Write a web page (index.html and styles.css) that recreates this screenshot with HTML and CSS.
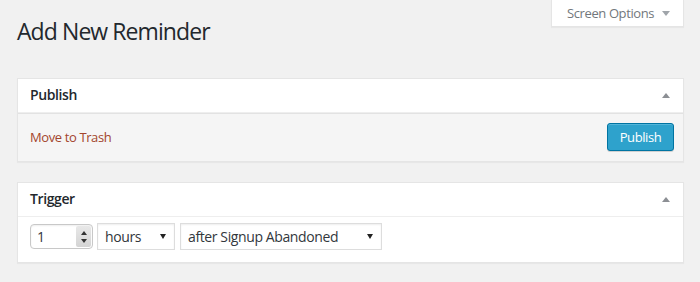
FILE: index.html
```html
<!DOCTYPE html>
<html>
<head>
<meta charset="utf-8">
<link rel="stylesheet" href="styles.css">
</head>
<body>
<div class="wrap">
  <div class="top">
    <h1 class="title">Add New Reminder</h1>
    <div class="screen-tab">Screen Options <span class="tab-caret"></span></div>
  </div>

  <div class="postbox">
    <div class="hndle"><span>Publish</span><span class="toggle"></span></div>
    <div class="actions">
      <a class="trash" href="#">Move to Trash</a>
      <button class="btn-primary">Publish</button>
    </div>
  </div>

  <div class="postbox">
    <div class="hndle"><span>Trigger</span><span class="toggle"></span></div>
    <div class="inside">
      <div class="number">
        <span class="num-val">1</span>
        <span class="spin"><span class="up"></span><span class="down"></span></span>
      </div>
      <div class="select sel-hours"><span>hours</span><span class="caret"></span></div>
      <div class="select sel-event"><span>after Signup Abandoned</span><span class="caret"></span></div>
    </div>
  </div>

  <div class="postbox"></div>
</div>
</body>
</html>
```

FILE: styles.css
```css
* { box-sizing: border-box; }
html, body { margin: 0; padding: 0; }
body {
  background: #f1f1f1;
  font-family: "Open Sans", "Noto Sans", sans-serif;
  color: #444;
  font-size: 13px;
  letter-spacing: -0.03em;
  overflow: hidden;
  height: 282px;
}
.wrap { padding: 0 16px 0 17px; }
.top { display: flex; align-items: flex-start; }
.title {
  flex: 1;
  margin: 17px 0 0 0;
  font-size: 23px;
  font-weight: 400;
  line-height: 29px;
  letter-spacing: -0.04em;
  color: #23282d;
}
.screen-tab {
  width: 133px;
  height: 27px;
  background: #fff;
  border: 1px solid #e5e5e5;
  border-top: none;
  box-shadow: 0 1px 1px rgba(0,0,0,.04);
  color: #72777c;
  font-size: 13px;
  line-height: 25px;
  padding-left: 15px;
  display: flex;
  align-items: center;
}
.tab-caret {
  width: 0; height: 0;
  border-left: 4px solid transparent;
  border-right: 4px solid transparent;
  border-top: 5px solid #a0a5aa;
  margin-left: 8px;
  margin-top: 1px;
}
.postbox {
  margin-top: 32px;
  background: #fff;
  border: 1px solid #e5e5e5;
  box-shadow: 0 1px 1px rgba(0,0,0,.04);
}
.postbox + .postbox { margin-top: 20px; }
.hndle {
  display: flex;
  justify-content: space-between;
  align-items: center;
  padding: 6px 12px 7px 12px;
  font-size: 14px;
  font-weight: 600;
  line-height: 20px;
  color: #23282d;
  border-bottom: 1px solid #eee;
}
.toggle {
  width: 0; height: 0;
  border-left: 4px solid transparent;
  border-right: 4px solid transparent;
  border-bottom: 5px solid #8c8f94;
  margin-right: 1px;
}
.actions {
  border-top: 1px solid #e2e2e2;
  background: #f5f5f5;
  padding: 9px 9px 10px 12px;
  display: flex;
  justify-content: space-between;
  align-items: center;
}
.trash {
  color: #a3452c;
  text-decoration: none;
  font-size: 13px;
  margin-top: -1px;
}
.btn-primary {
  height: 28px;
  padding: 0 10px;
  background: #2ea2cc;
  border: 1px solid #0074a2;
  border-radius: 3px;
  box-shadow: inset 0 1px 0 rgba(120,200,230,.5), 0 1px 0 rgba(0,0,0,.15);
  color: #fff;
  font-family: "Open Sans", "Noto Sans", sans-serif;
  font-size: 13px;
  letter-spacing: -0.03em;
  line-height: 26px;
  width: 67px;
}
.inside {
  padding: 6px 12px 12px 12px;
  display: flex;
  align-items: center;
}
.number {
  width: 63px;
  height: 25px;
  border: 1px solid #c8c8c8;
  border-radius: 4px;
  box-shadow: inset 0 1px 2px rgba(0,0,0,.07);
  display: flex;
  align-items: center;
  justify-content: space-between;
  padding: 0 1px 0 6px;
  background: #fff;
  font-size: 14px;
  color: #32373c;
}
.num-val { line-height: 20px; }
.spin {
  width: 15px;
  height: 21px;
  background: linear-gradient(#e8e8e8, #d4d4d4);
  border-radius: 2px;
  display: flex;
  flex-direction: column;
  align-items: center;
  justify-content: center;
  gap: 4px;
}
.up {
  width: 0; height: 0;
  border-left: 3px solid transparent;
  border-right: 3px solid transparent;
  border-bottom: 4px solid #333;
}
.down {
  width: 0; height: 0;
  border-left: 3px solid transparent;
  border-right: 3px solid transparent;
  border-top: 4px solid #333;
}
.select {
  height: 27px;
  border: 1px solid #ddd;
  box-shadow: inset 0 1px 2px rgba(0,0,0,.07);
  background: #fff;
  display: flex;
  align-items: center;
  justify-content: space-between;
  font-size: 14px;
  color: #32373c;
  padding: 0 8px 0 7px;
}
.sel-hours { width: 78px; margin-left: 4px; }
.sel-event { width: 202px; margin-left: 5px; padding-right: 8px; }
.caret {
  width: 0; height: 0;
  border-left: 3px solid transparent;
  border-right: 3px solid transparent;
  border-top: 5px solid #222;
}
.postbox:last-child { height: 10px; }
```
